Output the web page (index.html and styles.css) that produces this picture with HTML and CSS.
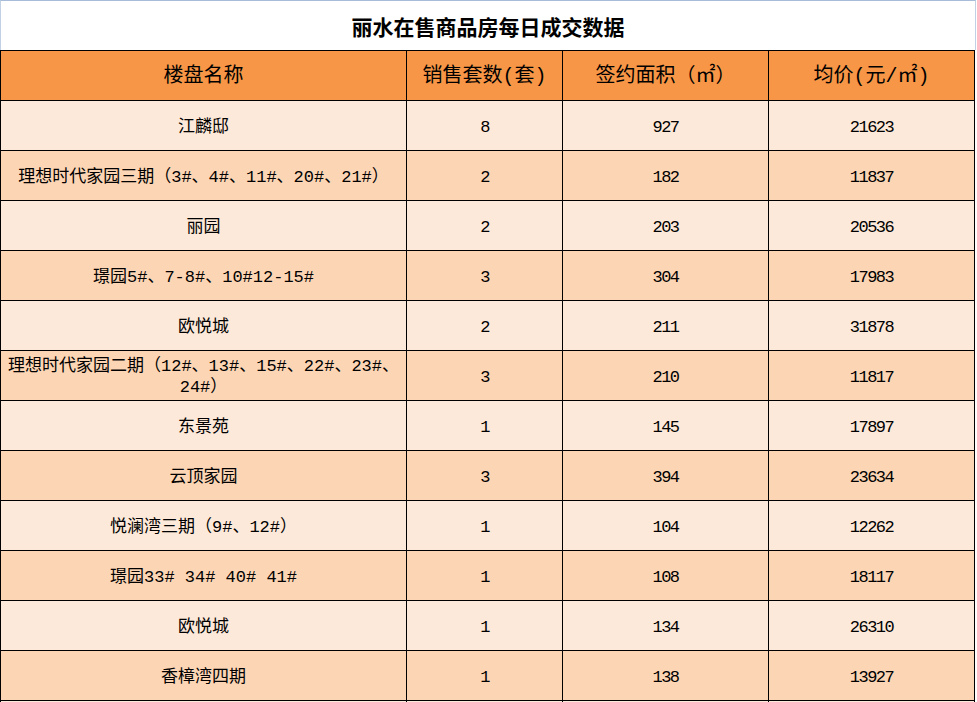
FILE: index.html
```html
<!DOCTYPE html>
<html lang="zh-CN">
<head>
<meta charset="utf-8">
<title>丽水在售商品房每日成交数据</title>
<link rel="stylesheet" href="styles.css">
</head>
<body>
<div class="sheet">
  <div class="title">丽水在售商品房每日成交数据</div>
  <table class="grid">
    <colgroup>
      <col class="c-name">
      <col class="c-count">
      <col class="c-area">
      <col class="c-price">
    </colgroup>
    <thead>
      <tr class="head">
        <th>楼盘名称</th>
        <th>销售套数(套)</th>
        <th>签约面积（㎡）</th>
        <th>均价(元/㎡)</th>
      </tr>
    </thead>
    <tbody>
      <tr class="light"><td class="name">江麟邸</td><td class="num">8</td><td class="num">927</td><td class="num">21623</td></tr>
      <tr class="dark"><td class="name">理想时代家园三期（3#、4#、11#、20#、21#）</td><td class="num">2</td><td class="num">182</td><td class="num">11837</td></tr>
      <tr class="light"><td class="name">丽园</td><td class="num">2</td><td class="num">203</td><td class="num">20536</td></tr>
      <tr class="dark"><td class="name">璟园5#、7-8#、10#12-15#</td><td class="num">3</td><td class="num">304</td><td class="num">17983</td></tr>
      <tr class="light"><td class="name">欧悦城</td><td class="num">2</td><td class="num">211</td><td class="num">31878</td></tr>
      <tr class="dark"><td class="name">理想时代家园二期（12#、13#、15#、22#、23#、24#）</td><td class="num">3</td><td class="num">210</td><td class="num">11817</td></tr>
      <tr class="light"><td class="name">东景苑</td><td class="num">1</td><td class="num">145</td><td class="num">17897</td></tr>
      <tr class="dark"><td class="name">云顶家园</td><td class="num">3</td><td class="num">394</td><td class="num">23634</td></tr>
      <tr class="light"><td class="name">悦澜湾三期（9#、12#）</td><td class="num">1</td><td class="num">104</td><td class="num">12262</td></tr>
      <tr class="dark"><td class="name">璟园33# 34# 40# 41#</td><td class="num">1</td><td class="num">108</td><td class="num">18117</td></tr>
      <tr class="light"><td class="name">欧悦城</td><td class="num">1</td><td class="num">134</td><td class="num">26310</td></tr>
      <tr class="dark"><td class="name">香樟湾四期</td><td class="num">1</td><td class="num">138</td><td class="num">13927</td></tr>
      <tr class="light"><td class="name">&nbsp;</td><td class="num">&nbsp;</td><td class="num">&nbsp;</td><td class="num">&nbsp;</td></tr>
    </tbody>
  </table>
</div>
</body>
</html>
```

FILE: styles.css
```css
html, body {
  margin: 0;
  padding: 0;
  background: #ffffff;
}

body {
  overflow: hidden;
  height: 702px;
  color: #000000;
  font-family: "Liberation Mono", "Noto Sans CJK SC", monospace;
}

.sheet {
  width: 976px;
}

.title {
  box-sizing: border-box;
  width: 976px;
  height: 50px;
  border-top: 1px solid #a7bcd8;
  border-left: 1px solid #c3d1e4;
  border-right: 1px solid #c3d1e4;
  display: flex;
  align-items: center;
  justify-content: center;
  padding-top: 2px;
  font-family: "Noto Sans CJK SC", sans-serif;
  font-weight: 700;
  font-size: 21px;
  line-height: 1;
}

.grid {
  border-collapse: collapse;
  table-layout: fixed;
  width: 975px;
}

.c-name { width: 406px; }
.c-count { width: 156px; }
.c-area { width: 206px; }
.c-price { width: 206px; }

.grid th,
.grid td {
  box-sizing: border-box;
  height: 50px;
  border: 1px solid #000000;
  padding: 3px 4px 0;
  text-align: center;
  vertical-align: middle;
  font-weight: 400;
}

.grid th {
  font-size: 20px;
  line-height: 24px;
  font-family: "Liberation Mono", "Noto Sans CJK SC", monospace;
}

.head { background: #f79646; }
.light { background: #fde9d9; }
.dark { background: #fcd5b4; }

.name {
  font-size: 17px;
  line-height: 21px;
}

.num {
  font-size: 17px;
  line-height: 21px;
  letter-spacing: -1.5px;
}
```
